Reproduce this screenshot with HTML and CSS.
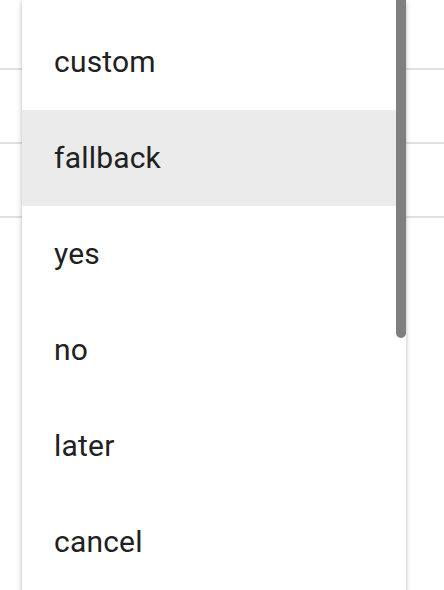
FILE: index.html
```html
<!DOCTYPE html>
<html lang="en">
<head>
    <meta charset="UTF-8">
    <meta name="viewport" content="width=device-width, initial-scale=1.0">
    <title>Select option</title>
    <link rel="stylesheet" href="styles.css">
</head>
<body>
    <!-- Table rows behind the open menu -->
    <div class="rows">
        <div class="row"></div>
        <div class="row"></div>
        <div class="row"></div>
    </div>

    <!-- Dropdown menu -->
    <div class="menu">
        <ul class="menu-list">
            <li class="menu-item">custom</li>
            <li class="menu-item selected">fallback</li>
            <li class="menu-item">yes</li>
            <li class="menu-item">no</li>
            <li class="menu-item">later</li>
            <li class="menu-item">cancel</li>
        </ul>
        <div class="scroll-thumb"></div>
    </div>
</body>
</html>
```

FILE: styles.css
```css
body {
    font-family: 'Roboto', 'Liberation Sans', sans-serif;
    background-color: #fff;
    color: #212121;
    margin: 0;
    padding: 0;
    height: 590px;
    overflow: hidden;
    position: relative;
}

.rows {
    margin-top: -4px;
}

.row {
    height: 72px;
    border-bottom: 2px solid #e0e0e0;
}

.menu {
    position: absolute;
    top: 0;
    left: 22px;
    width: 384px;
    height: 600px;
    background: #fff;
    box-shadow: 0 2px 6px rgba(0,0,0,0.2), 0 1px 3px rgba(0,0,0,0.12);
    overflow: hidden;
}

.menu-list {
    list-style: none;
    margin: 0;
    padding: 14px 0 0 0;
}

.menu-item {
    height: 96px;
    box-sizing: border-box;
    display: flex;
    align-items: center;
    padding: 0 0 2px 32px;
    font-size: 30px;
    letter-spacing: 0.2px;
}

.menu-item.selected {
    background: #ebebeb;
}

.scroll-thumb {
    position: absolute;
    top: 0;
    right: 0;
    width: 10px;
    height: 338px;
    background: #7f7f7f;
    border-radius: 0 0 5px 5px;
}
```
